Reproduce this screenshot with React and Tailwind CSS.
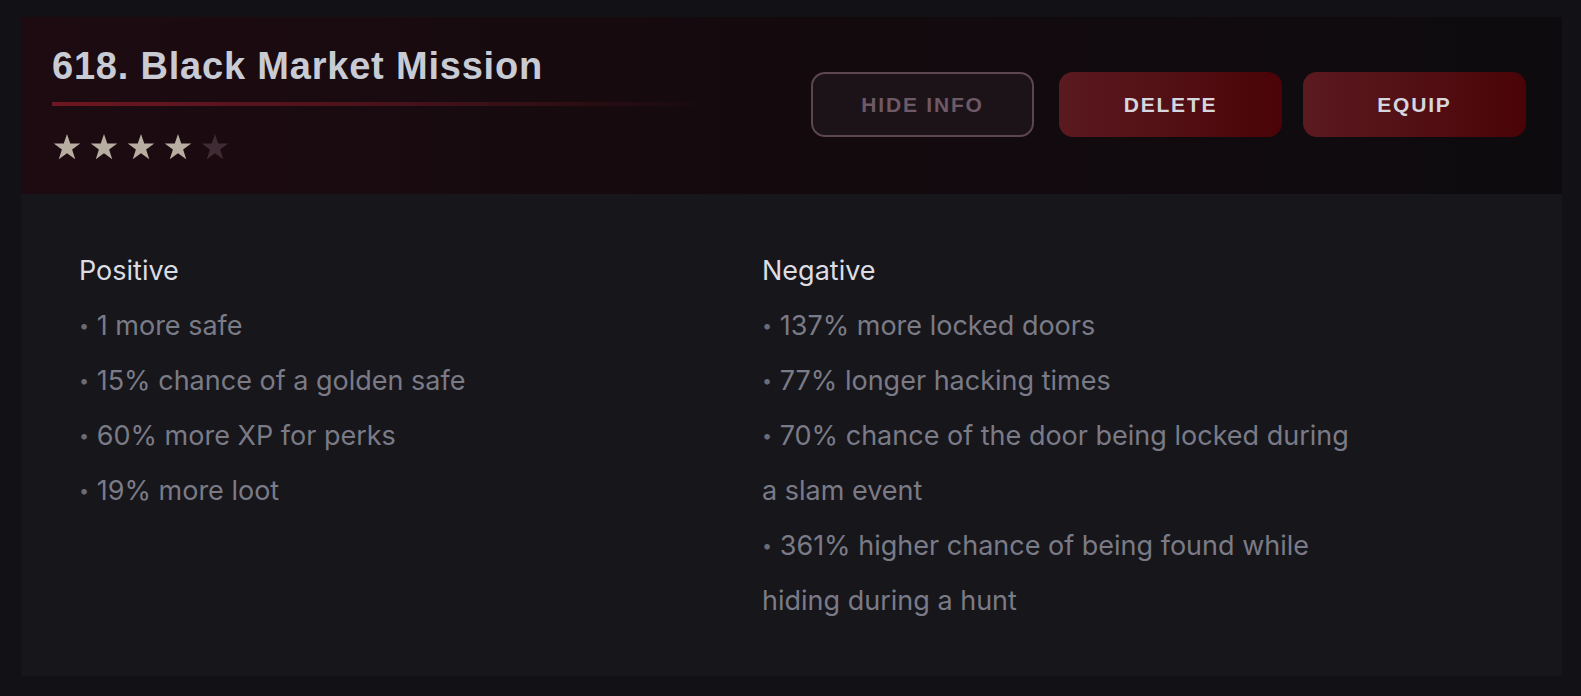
const positives = [
  "1 more safe",
  "15% chance of a golden safe",
  "60% more XP for perks",
  "19% more loot",
];

const negatives = [
  "137% more locked doors",
  "77% longer hacking times",
  "70% chance of the door being locked during a slam event",
  "361% higher chance of being found while hiding during a hunt",
];

const Star = ({ filled }) => (
  <svg viewBox="0 0 24 24" className="w-[30px] h-[30px]">
    <polygon
      points="12,1.5 14.6,9.2 22.6,9.2 16.1,14 18.6,21.8 12,17 5.4,21.8 7.9,14 1.4,9.2 9.4,9.2"
      fill={filled ? "#b7ada0" : "#3e2b33"}
    />
  </svg>
);

const EffectList = ({ title, items }) => (
  <div className="max-w-[595px]">
    <h4 className="text-[27px] leading-[55px] text-[#dcdde3]">{title}</h4>
    <ul className="text-[27px] leading-[55px] text-[#7a7b87]">
      {items.map((item) => (
        <li key={item}>
          <span className="text-[18px] text-[#6a6b75] align-[3px]">•</span> {item}
        </li>
      ))}
    </ul>
  </div>
);

const Button = ({ children, variant }) => (
  <button
    className={`w-[223px] h-[65px] rounded-[14px] font-['Liberation_Sans',sans-serif] font-bold text-[21px] tracking-[1.8px] ${
      variant === "outline"
        ? "mr-[4px] border-2 border-[#5d4651] bg-[#1c1319] text-[#6e5966]"
        : "bg-gradient-to-r from-[#5b1920] to-[#4a0407] text-[#d6d6de]"
    }`}
  >
    {children}
  </button>
);

export default function App() {
  return (
    <div className="w-[1581px] h-[696px] bg-[#121116] pt-[17px] pl-[21px] font-['Inter',sans-serif]">
      <div className="w-[1541px] h-[659px] bg-[#17161b] flex flex-col">
        <div className="h-[177px] flex items-start justify-between pl-[31px] pr-[36px] bg-gradient-to-r from-[#1d0b11] via-[#140a0e] to-[#0d0b0e]">
          <div className="pt-[28px]">
            <h2 className="font-['Liberation_Sans',sans-serif] font-bold text-[38px] leading-[42px] tracking-[0.8px] text-[#c9cbd4]">
              618. Black Market Mission
            </h2>
            <div className="mt-[15px] w-[660px] h-[4px] bg-gradient-to-r from-[#6e1621] via-[#4a121b] to-transparent" />
            <div className="mt-[26px] flex gap-[7px]">
              <Star filled />
              <Star filled />
              <Star filled />
              <Star filled />
              <Star />
            </div>
          </div>
          <div className="pt-[55px] flex gap-[21px]">
            <Button variant="outline">HIDE INFO</Button>
            <Button>DELETE</Button>
            <Button>EQUIP</Button>
          </div>
        </div>
        <div className="grid grid-cols-[625px_1fr] gap-[58px] px-[58px] pt-[49px]">
          <EffectList title="Positive" items={positives} />
          <EffectList title="Negative" items={negatives} />
        </div>
      </div>
    </div>
  );
}
